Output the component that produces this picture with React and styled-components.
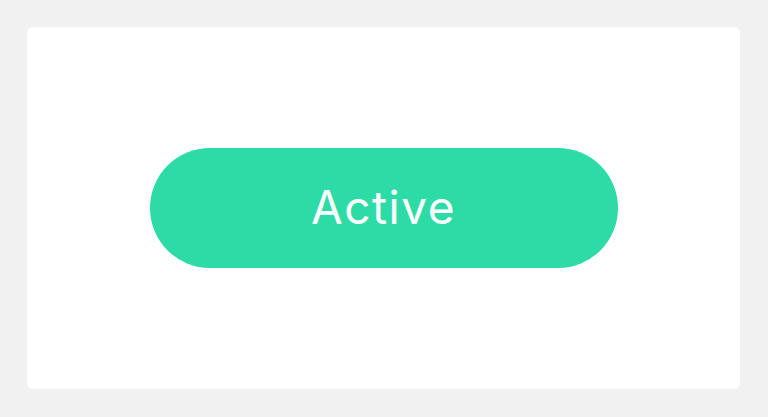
import React from "react";
import styled, { createGlobalStyle } from "styled-components";

const Global = createGlobalStyle`
  html, body { margin: 0; padding: 0; background: #f1f1f1; }
  body { font-family: Inter, "Open Sans", sans-serif; }
  #root { padding: 27px 28px 28px 27px; box-sizing: border-box; height: 417px; }
`;

const Card = styled.div`
  height: 362px;
  background: #ffffff;
  border-radius: 6px;
  display: flex;
  align-items: center;
  justify-content: center;
`;

const PillButton = styled.button`
  width: 468px;
  height: 120px;
  border: none;
  border-radius: 60px;
  background: #2ddba6;
  color: #ffffff;
  font-family: Inter, "Open Sans", sans-serif;
  font-size: 46px;
  font-weight: 400;
  letter-spacing: 1.5px;
  cursor: pointer;
  display: flex;
  align-items: center;
  justify-content: center;
  padding: 0 0 2px;
`;

export default function App() {
  return (
    <>
      <Global />
      <Card>
        <PillButton>Active</PillButton>
      </Card>
    </>
  );
}
